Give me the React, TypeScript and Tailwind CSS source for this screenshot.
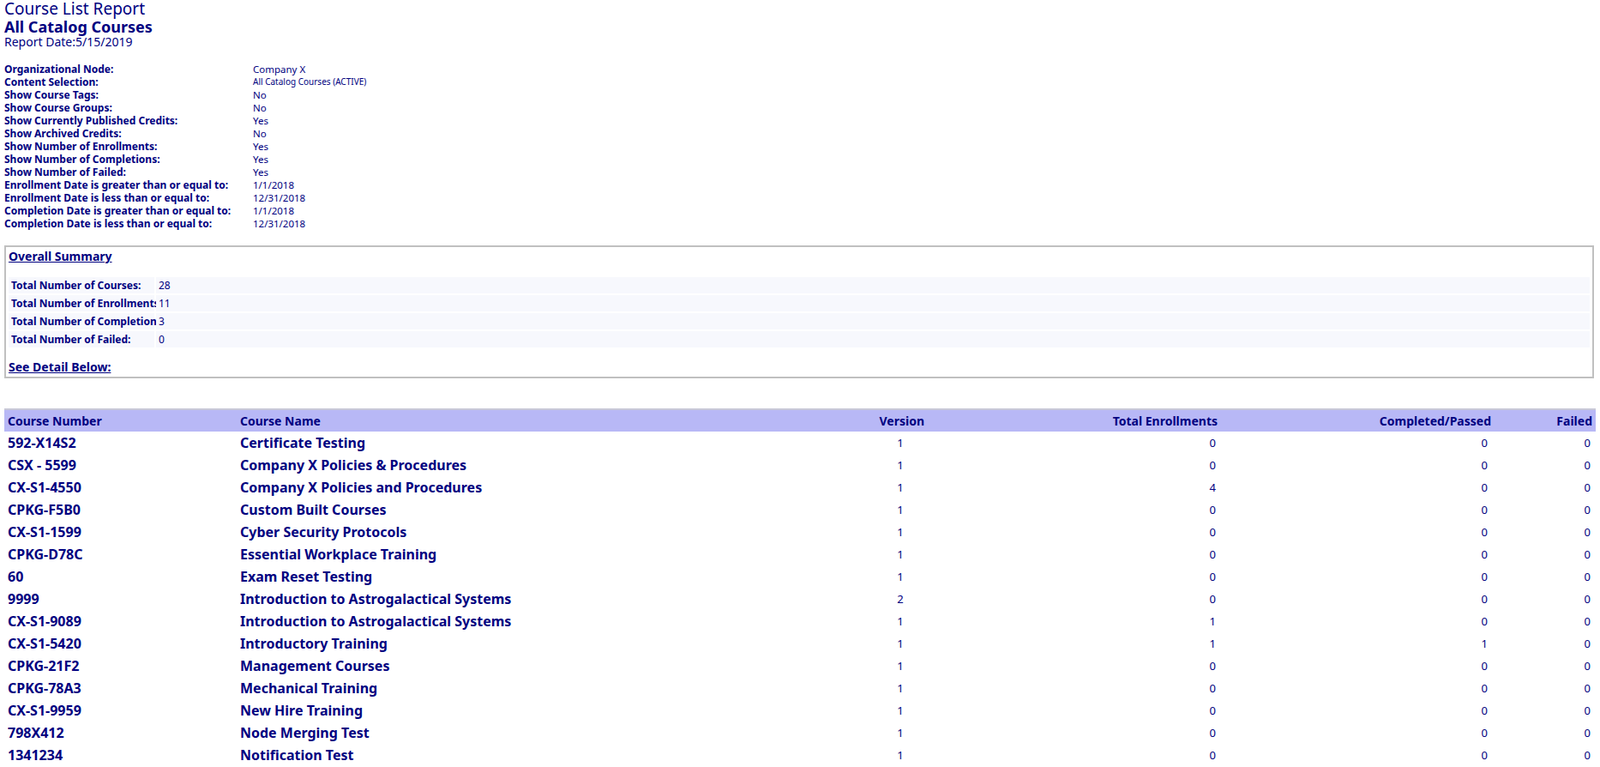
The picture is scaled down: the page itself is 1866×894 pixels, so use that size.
const params: [string, string][] = [
  ["Organizational Node:", "Company X"],
  ["Content Selection:", "All Catalog Courses (ACTIVE)"],
  ["Show Course Tags:", "No"],
  ["Show Course Groups:", "No"],
  ["Show Currently Published Credits:", "Yes"],
  ["Show Archived Credits:", "No"],
  ["Show Number of Enrollments:", "Yes"],
  ["Show Number of Completions:", "Yes"],
  ["Show Number of Failed:", "Yes"],
  ["Enrollment Date is greater than or equal to:", "1/1/2018"],
  ["Enrollment Date is less than or equal to:", "12/31/2018"],
  ["Completion Date is greater than or equal to:", "1/1/2018"],
  ["Completion Date is less than or equal to:", "12/31/2018"],
];

const summary: [string, string][] = [
  ["Total Number of Courses:", "28"],
  ["Total Number of Enrollments:", "11"],
  ["Total Number of Completions:", "3"],
  ["Total Number of Failed:", "0"],
];

const courses: [string, string, number, number, number, number][] = [
  ["592-X14S2", "Certificate Testing", 1, 0, 0, 0],
  ["CSX - 5599", "Company X Policies & Procedures", 1, 0, 0, 0],
  ["CX-S1-4550", "Company X Policies and Procedures", 1, 4, 0, 0],
  ["CPKG-F5B0", "Custom Built Courses", 1, 0, 0, 0],
  ["CX-S1-1599", "Cyber Security Protocols", 1, 0, 0, 0],
  ["CPKG-D78C", "Essential Workplace Training", 1, 0, 0, 0],
  ["60", "Exam Reset Testing", 1, 0, 0, 0],
  ["9999", "Introduction to Astrogalactical Systems", 2, 0, 0, 0],
  ["CX-S1-9089", "Introduction to Astrogalactical Systems", 1, 1, 0, 0],
  ["CX-S1-5420", "Introductory Training", 1, 1, 1, 0],
  ["CPKG-21F2", "Management Courses", 1, 0, 0, 0],
  ["CPKG-78A3", "Mechanical Training", 1, 0, 0, 0],
  ["CX-S1-9959", "New Hire Training", 1, 0, 0, 0],
  ["798X412", "Node Merging Test", 1, 0, 0, 0],
  ["1341234", "Notification Test", 1, 0, 0, 0],
];

export default function App() {
  return (
    <div className="min-h-screen bg-white text-[#000080]">
      <div className="px-[5px]">
        <div className="font-['DejaVu_Sans',Verdana,sans-serif]">
          <div className="text-[19px] leading-[21px]">Course List Report</div>
          <div className="text-[18px] leading-[20px] font-bold">All Catalog Courses</div>
          <div className="text-[14px] leading-[16px]">Report Date:5/15/2019</div>
          <div className="mt-[16px]">
            {params.map(([k, v]) => (
              <div key={k} className="flex h-[15px] items-center">
                <div className="w-[290px] shrink-0 text-[12px] font-bold whitespace-nowrap">{k}</div>
                {k === "Content Selection:" ? (
                  <div className="text-[10px] font-['Liberation_Sans',Arial,sans-serif]">{v}</div>
                ) : (
                  <div className="text-[11.5px]">{v}</div>
                )}
              </div>
            ))}
          </div>
        </div>

        <div className="mt-[18px] mr-[2px] border-2 border-[#c0c0c0] h-[155px] px-[3px] pt-[2px] font-['Liberation_Sans',Arial,sans-serif]">
          <div className="text-[14px] font-bold underline leading-[18px]">Overall Summary</div>
          <div className="mt-[15px] flex flex-col gap-[2px]">
            {summary.map(([k, v]) => (
              <div key={k} className="flex gap-[2px] h-[19px] text-[12px] font-bold">
                <div className="w-[170px] bg-[#f7f8fd] px-[3px] flex items-center whitespace-nowrap">{k}</div>
                <div className="flex-1 bg-[#f7f8fd] px-[3px] flex items-center font-normal">{v}</div>
              </div>
            ))}
          </div>
          <div className="mt-[14px] text-[14px] font-bold underline leading-[18px]">See Detail Below:</div>
        </div>

        <table className="mt-[35px] w-full border-collapse font-['Liberation_Sans',Arial,sans-serif]">
          <thead>
            <tr className="bg-[#b8b8f6] border-t-2 border-[#c8c8d8] h-[26px] text-[14px] font-bold">
              <th className="w-[274px] text-left px-[4px]">Course Number</th>
              <th className="text-left px-[1px]">Course Name</th>
              <th className="w-[60px] text-right px-[2px]">Version</th>
              <th className="w-[342px] text-right px-[2px]">Total Enrollments</th>
              <th className="w-[319px] text-right px-[2px]">Completed/Passed</th>
              <th className="w-[120px] text-right px-[4px]">Failed</th>
            </tr>
          </thead>
          <tbody>
            {courses.map(([num, name, ver, enr, comp, fail]) => (
              <tr key={num} className="h-[26px]">
                <td className="px-[4px] text-[16px] font-bold">{num}</td>
                <td className="px-[1px] text-[16px] font-bold">{name}</td>
                <td className="text-center text-[13px] pt-[2px]">{ver}</td>
                <td className="text-right text-[13px] px-[4px] pt-[2px]">{enr}</td>
                <td className="text-right text-[13px] px-[6px] pt-[2px]">{comp}</td>
                <td className="text-right text-[13px] px-[6px] pt-[2px]">{fail}</td>
              </tr>
            ))}
          </tbody>
        </table>
      </div>
    </div>
  );
}
